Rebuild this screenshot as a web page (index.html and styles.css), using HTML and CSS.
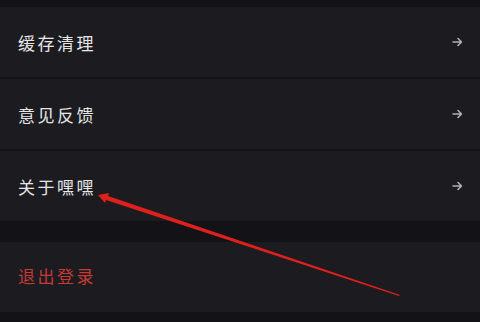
FILE: index.html
```html
<!DOCTYPE html>
<html lang="zh">
<head>
<meta charset="utf-8">
<link rel="stylesheet" href="styles.css">
</head>
<body>
<div class="page">
  <div class="group">
    <div class="row"><span class="label">缓存清理</span><svg class="arrow" width="11" height="10" viewBox="0 0 11 10"><path d="M1 5H9.5M6 1.5L9.5 5L6 8.5" fill="none" stroke="#b0b0b4" stroke-width="1.6" stroke-linecap="round" stroke-linejoin="round"/></svg></div>
    <div class="row"><span class="label">意见反馈</span><svg class="arrow" width="11" height="10" viewBox="0 0 11 10"><path d="M1 5H9.5M6 1.5L9.5 5L6 8.5" fill="none" stroke="#b0b0b4" stroke-width="1.6" stroke-linecap="round" stroke-linejoin="round"/></svg></div>
    <div class="row"><span class="label">关于嘿嘿</span><svg class="arrow" width="11" height="10" viewBox="0 0 11 10"><path d="M1 5H9.5M6 1.5L9.5 5L6 8.5" fill="none" stroke="#b0b0b4" stroke-width="1.6" stroke-linecap="round" stroke-linejoin="round"/></svg></div>
  </div>
  <div class="group logout-group">
    <div class="row"><span class="label logout">退出登录</span></div>
  </div>
  <svg class="annot" width="480" height="322" viewBox="0 0 480 322">
    <polygon points="98,195 109,193 108,196 400,295 399,296 106,200 105,203" fill="#e0201c"/>
  </svg>
</div>
</body>
</html>
```
FILE: styles.css
```css
html, body {
  margin: 0;
  padding: 0;
  background: #131216;
}
.page {
  position: relative;
  width: 480px;
  height: 322px;
  overflow: hidden;
  padding-top: 7px;
  box-sizing: border-box;
  font-family: "Noto Sans CJK SC", "Noto Sans", sans-serif;
}
.group {
  display: flex;
  flex-direction: column;
  gap: 2px;
}
.logout-group {
  margin-top: 21px;
}
.row {
  height: 70px;
  background: #1c1b20;
  display: flex;
  align-items: center;
  justify-content: space-between;
  padding: 0 17px 0 18px;
}
.label {
  font-size: 17px;
  letter-spacing: 2.5px;
  color: #e6e6e8;
  line-height: 1;
}
.logout {
  color: #c53a35;
  margin-top: -4px;
}
.arrow {
  display: block;
}
.annot {
  position: absolute;
  left: 0;
  top: 0;
  pointer-events: none;
}
```
